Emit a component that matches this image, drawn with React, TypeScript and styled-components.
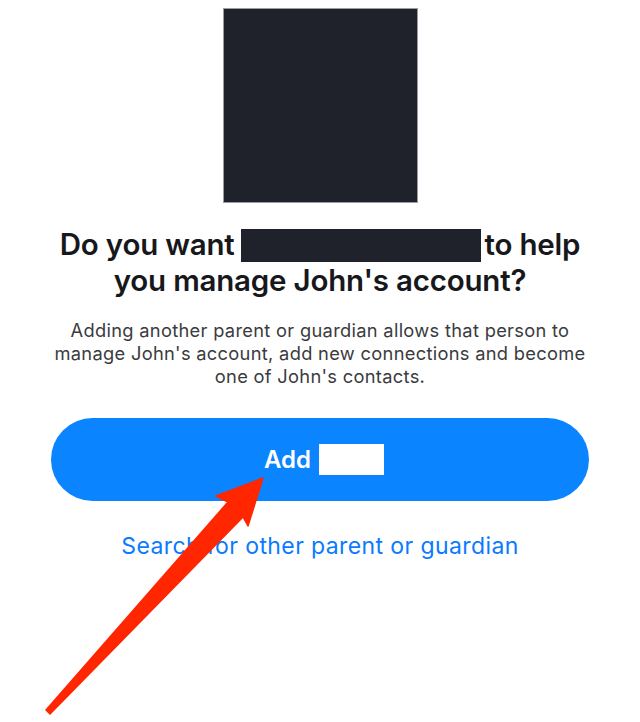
import styled, { createGlobalStyle } from "styled-components";

const GlobalStyle = createGlobalStyle`
  html, body {
    margin: 0;
    padding: 0;
    background: #ffffff;
  }
  body {
    font-family: Inter, "Noto Sans", "Liberation Sans", sans-serif;
    -webkit-font-smoothing: antialiased;
  }
`;

const Page = styled.div`
  position: relative;
  width: 640px;
  height: 722px;
  overflow: hidden;
  display: flex;
  flex-direction: column;
  align-items: center;
  background: #ffffff;
`;

const Avatar = styled.div`
  margin-top: 9px;
  width: 193px;
  height: 193px;
  background: #1f222a;
  box-shadow: 0 0 0 1px #9a9ca2;
`;

const Title = styled.h1`
  margin: 24px 0 0;
  text-align: center;
  font-size: 29.5px;
  line-height: 36px;
  font-weight: 600;
  letter-spacing: -0.2px;
  color: #17181c;
  white-space: nowrap;
`;

const Redacted = styled.span<{ $w: number; $h: number; $bg: string; $drop: number }>`
  display: inline-block;
  width: ${(p) => p.$w}px;
  height: ${(p) => p.$h}px;
  background: ${(p) => p.$bg};
  vertical-align: -${(p) => p.$drop}px;
`;

const TitleRedacted = styled(Redacted)`
  margin: 0 4px 0 6px;
`;

const Body = styled.p`
  margin: 21px 0 0;
  text-align: center;
  font-size: 18.3px;
  line-height: 23px;
  font-weight: 400;
  letter-spacing: 0.3px;
  color: #3a3b40;
  white-space: nowrap;
`;

const PrimaryButton = styled.button`
  margin-top: 30px;
  width: 538px;
  height: 83px;
  border: none;
  border-radius: 42px;
  background: #0a84ff;
  display: flex;
  align-items: center;
  justify-content: center;
  gap: 8px;
  padding: 0 0 0 8px;
  color: #ffffff;
  font-family: inherit;
  font-size: 24px;
  font-weight: 600;
  cursor: pointer;
`;

const LinkButton = styled.button`
  margin-top: 31px;
  border: none;
  background: transparent;
  padding: 0;
  color: #0a7aff;
  font-family: inherit;
  font-size: 23px;
  line-height: 28px;
  letter-spacing: 0.4px;
  cursor: pointer;
`;

const ArrowLayer = styled.svg`
  position: absolute;
  left: 0;
  top: 0;
  pointer-events: none;
`;

export default function App() {
  return (
    <>
      <GlobalStyle />
      <Page>
        <Avatar />
        <Title>
          Do you want
          <TitleRedacted $w={240} $h={33} $bg="#1f222a" $drop={7} />
          to help
          <br />
          you manage John's account?
        </Title>
        <Body>
          Adding another parent or guardian allows that person to
          <br />
          manage John's account, add new connections and become
          <br />
          one of John's contacts.
        </Body>
        <PrimaryButton type="button">
          Add
          <Redacted $w={65} $h={31} $bg="#ffffff" $drop={0} />
        </PrimaryButton>
        <LinkButton type="button">Search for other parent or guardian</LinkButton>
        <ArrowLayer width="640" height="722" viewBox="0 0 640 722">
          <path
            d="M46 710 L50 714 L243 517 L248 526 L263 478 L216 496 L228 502 Z"
            fill="#ff2600"
            stroke="#ff2600"
            strokeWidth="1.5"
            strokeLinejoin="round"
          />
        </ArrowLayer>
      </Page>
    </>
  );
}
